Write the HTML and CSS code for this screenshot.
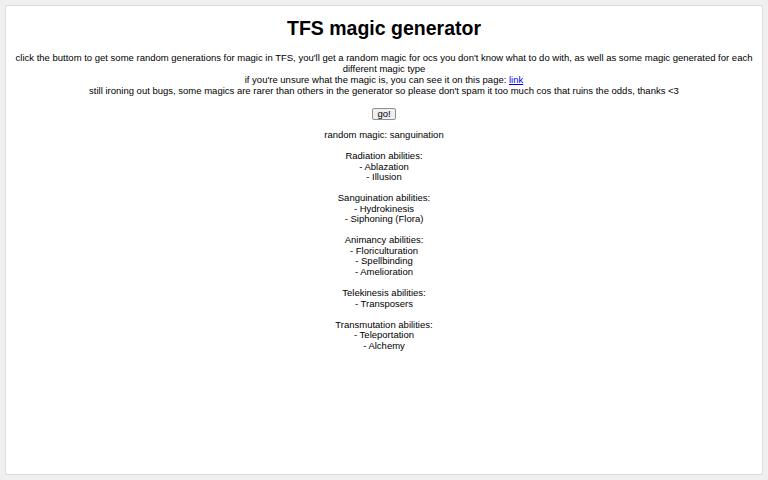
FILE: index.html
```html
<!DOCTYPE html>
<html lang="en">
<head>
<meta charset="utf-8">
<title>TFS magic generator</title>
<link rel="stylesheet" href="styles.css">
</head>
<body>
<main class="page">
  <h1 class="title">TFS magic generator</h1>
  <p class="intro">
    click the buttom to get some random generations for magic in TFS, you'll get a random magic for ocs you don't know what to do with, as well as some magic generated for each different magic type<br>
    if you're unsure what the magic is, you can see it on this page: <a href="#">link</a><br>
    still ironing out bugs, some magics are rarer than others in the generator so please don't spam it too much cos that ruins the odds, thanks &lt;3
  </p>
  <button class="go" type="button">go!</button>
  <div class="results">
    <p class="group">random magic: sanguination</p>
    <p class="group">Radiation abilities:<br>- Ablazation<br>- Illusion</p>
    <p class="group">Sanguination abilities:<br>- Hydrokinesis<br>- Siphoning (Flora)</p>
    <p class="group">Animancy abilities:<br>- Floriculturation<br>- Spellbinding<br>- Amelioration</p>
    <p class="group">Telekinesis abilities:<br>- Transposers</p>
    <p class="group">Transmutation abilities:<br>- Teleportation<br>- Alchemy</p>
  </div>
</main>
</body>
</html>
```
FILE: styles.css
```css
html, body {
  height: 100%;
}

body {
  margin: 0;
  padding: 5px;
  box-sizing: border-box;
  background: #f0f0f0;
  font-family: "Liberation Sans", Arial, sans-serif;
  color: #000;
}

.page {
  height: 100%;
  box-sizing: border-box;
  background: #fff;
  border: 1px solid #dcdcdc;
  text-align: center;
  padding: 0 4px;
  display: flex;
  flex-direction: column;
  align-items: center;
}

.title {
  font-size: 19.5px;
  line-height: 22px;
  font-weight: bold;
  margin: 11px 0 13px;
}

.intro {
  font-size: 9.5px;
  line-height: 11px;
  margin: 0 0 12px;
}

.intro a {
  color: #0000ee;
}

.go {
  font-family: "Liberation Sans", Arial, sans-serif;
  font-size: 9.5px;
  line-height: 10px;
  padding: 0 4px;
  background: #efefef;
  border: 1px solid #8f8f8f;
  border-radius: 2px;
  margin: 0;
  color: #000;
}

.results {
  font-size: 9.5px;
  line-height: 10.55px;
  margin-top: 10px;
}

.group {
  margin: 0 0 10.5px;
}
```
